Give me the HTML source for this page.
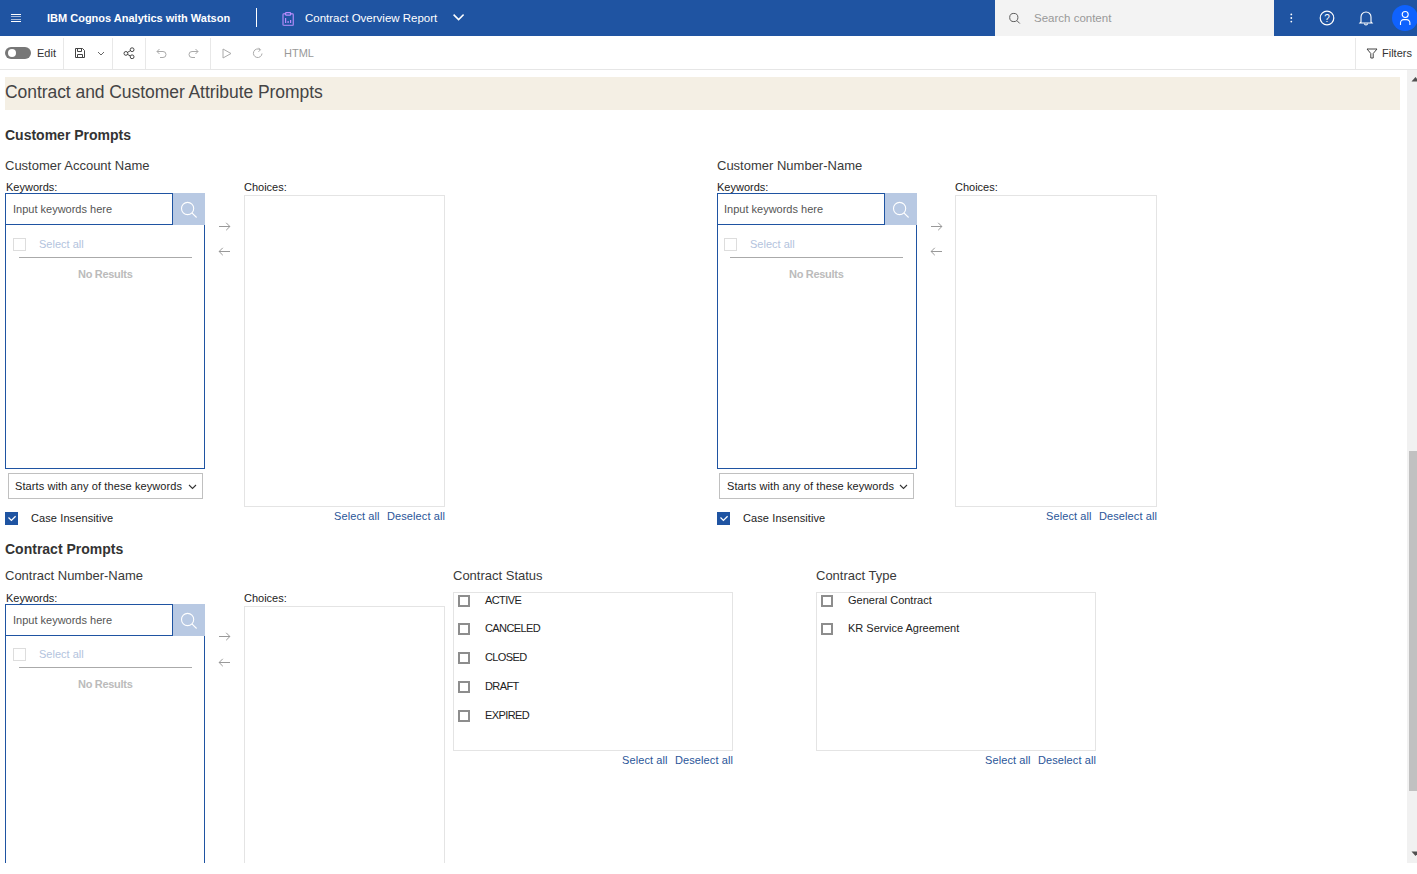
<!DOCTYPE html>
<html><head><meta charset="utf-8"><title>Contract Overview Report</title>
<style>
*{box-sizing:border-box;margin:0;padding:0}
html,body{width:1417px;height:874px;overflow:hidden;background:#fff;font-family:"Liberation Sans",sans-serif;position:relative}
.a{position:absolute;white-space:nowrap;line-height:normal}
#top{position:absolute;left:0;top:0;width:1417px;height:36px;background:#1f54a2}
#tb{position:absolute;left:0;top:36px;width:1417px;height:34px;background:#fff;border-bottom:1px solid #e6e6e6}
#content{position:absolute;left:0;top:0;width:1407px;height:863px;overflow:hidden;clip-path:inset(70px 0 0 0)}
.sep{position:absolute;top:2px;width:1px;height:31px;background:#e8e8e8}
.hdr{font-size:17.5px;color:#444;letter-spacing:-0.06px}
.h2{font-size:14px;font-weight:bold;color:#333}
.lab{font-size:13px;color:#3a3a3a}
.k{font-size:11px;color:#222}
.inp{position:absolute;border:1px solid #1f54a2;background:#fff}
.btn{position:absolute;background:#b8c9e3}
.res{position:absolute;border:1px solid #1f54a2;border-top:none}
.cb{position:absolute;width:13px;height:13px;border:1px solid #ddd;background:#fff}
.cbg{position:absolute;width:12px;height:12px;border:2px solid #8d8d8d;background:#fff}
.box{position:absolute;border:1px solid #e4e4e4}
.lnk{font-size:11px;color:#2a5699;letter-spacing:0.1px}
.item{font-size:11px;color:#222}
.caps{letter-spacing:-0.6px}
</style></head><body>

<div id="top">
  <div class="a" style="left:11px;top:14px;width:10px;height:1px;background:#fff"></div>
  <div class="a" style="left:11px;top:16px;width:10px;height:1px;background:#a9bbd9"></div>
  <div class="a" style="left:11px;top:19px;width:10px;height:1px;background:#a9bbd9"></div>
  <div class="a" style="left:11px;top:21px;width:10px;height:1px;background:#fff"></div>
  <div class="a" style="left:47px;top:12px;font-size:11px;font-weight:bold;color:#fff;letter-spacing:0px">IBM Cognos Analytics with Watson</div>
  <div class="a" style="left:256px;top:8px;width:1px;height:19px;background:#fff"></div>
  <svg class="a" style="left:280px;top:10px" width="16" height="18" viewBox="0 0 16 18"><rect x="3" y="3.8" width="10.3" height="11.6" rx="1" fill="none" stroke="#9a82e8" stroke-width="1.4"/><rect x="5.6" y="2.6" width="5" height="2.6" rx="0.8" fill="#1f54a2" stroke="#b98cff" stroke-width="1.3"/><path d="M5.6 8v5M8.1 11v2M10.6 10v3" stroke="#b98cff" stroke-width="1.2"/></svg>
  <div class="a" style="left:305px;top:12px;font-size:11.5px;color:#fff">Contract Overview Report</div>
  <svg class="a" style="left:452px;top:12px" width="12" height="10" viewBox="0 0 12 10"><path d="M1.6 2.6l5 5 5-5" fill="none" stroke="#fff" stroke-width="1.5"/></svg>
  <div class="a" style="left:995px;top:0;width:279px;height:36px;background:#f3f3f3"></div>
  <svg class="a" style="left:1008px;top:12px" width="14" height="14" viewBox="0 0 14 14"><circle cx="5.8" cy="5.5" r="4.1" fill="none" stroke="#555" stroke-width="0.95"/><path d="M8.8 8.5l3 3" stroke="#555" stroke-width="0.95"/></svg>
  <div class="a" style="left:1034px;top:12px;font-size:11.5px;color:#999">Search content</div>
  <svg class="a" style="left:1288px;top:12px" width="6" height="12" viewBox="0 0 6 12"><circle cx="3.3" cy="2.4" r="0.9" fill="#fff"/><circle cx="3.3" cy="6" r="0.9" fill="#fff"/><circle cx="3.3" cy="9.6" r="0.9" fill="#fff"/></svg>
  <svg class="a" style="left:1319px;top:10px" width="16" height="16" viewBox="0 0 16 16"><circle cx="8" cy="8" r="6.8" fill="none" stroke="#fff" stroke-width="1.2"/><text x="8" y="12" text-anchor="middle" font-size="10" fill="#fff" font-family="Liberation Sans">?</text></svg>
  <svg class="a" style="left:1358px;top:10px" width="16" height="16" viewBox="0 0 16 16"><path d="M3 12V7a5 5 0 0 1 10 0v5l1 1H2z" fill="none" stroke="#fff" stroke-width="1.1"/><path d="M6.5 13.5a1.5 1.5 0 0 0 3 0" fill="none" stroke="#fff" stroke-width="1.1"/></svg>
  <div class="a" style="left:1392px;top:5px;width:26px;height:26px;border-radius:13px;background:#0f62fe"></div>
  <svg class="a" style="left:1397px;top:9px" width="16" height="18" viewBox="0 0 16 18"><circle cx="8.2" cy="5.5" r="3" fill="none" stroke="#fff" stroke-width="1.1"/><path d="M3.5 16v-2.2a3.2 3.2 0 0 1 3.2-3.2h3a3.2 3.2 0 0 1 3.2 3.2v2.2" fill="none" stroke="#fff" stroke-width="1.1"/></svg>
</div>

<div id="tb">
  <div class="a" style="left:5px;top:11px;width:26px;height:12px;border-radius:6px;background:#777"></div>
  <div class="a" style="left:8px;top:13px;width:8px;height:8px;border-radius:4px;background:#fff"></div>
  <div class="a" style="left:37px;top:11px;font-size:11px;color:#333">Edit</div>
  <div class="sep" style="left:63px"></div>
  <svg class="a" style="left:74px;top:47px;top:11px" width="12" height="12" viewBox="0 0 12 12"><path d="M1.5 1.5h7l2 2v7h-9z" fill="none" stroke="#444" stroke-width="1"/><path d="M3.5 1.5v3h4v-3M3.5 10.5v-3h5v3" fill="none" stroke="#444" stroke-width="1"/></svg>
  <svg class="a" style="left:97px;top:15px" width="8" height="5" viewBox="0 0 8 5"><path d="M1 1l3 3 3-3" fill="none" stroke="#666" stroke-width="1"/></svg>
  <div class="sep" style="left:112px"></div>
  <svg class="a" style="left:123px;top:11px" width="12" height="12" viewBox="0 0 12 12"><circle cx="2.9" cy="6.4" r="1.9" fill="none" stroke="#444" stroke-width="1"/><circle cx="9.1" cy="2.7" r="1.9" fill="none" stroke="#444" stroke-width="1"/><circle cx="9.1" cy="9.8" r="1.9" fill="none" stroke="#444" stroke-width="1"/><path d="M4.5 5.4l3-1.8M4.5 7.4l3 1.6" stroke="#444" stroke-width="1"/></svg>
  <div class="sep" style="left:145px"></div>
  <svg class="a" style="left:156px;top:12px" width="11" height="10" viewBox="0 0 11 10"><path d="M3.5 1L1 3.5 3.5 6M1 3.5h6a3 3 0 0 1 0 6H4" fill="none" stroke="#aaa" stroke-width="1"/></svg>
  <svg class="a" style="left:188px;top:12px" width="11" height="10" viewBox="0 0 11 10"><path d="M7.5 1L10 3.5 7.5 6M10 3.5H4a3 3 0 0 0 0 6h3" fill="none" stroke="#aaa" stroke-width="1"/></svg>
  <div class="sep" style="left:210px"></div>
  <svg class="a" style="left:222px;top:12px" width="10" height="11" viewBox="0 0 10 11"><path d="M1 1l8 4.5-8 4.5z" fill="none" stroke="#aaa" stroke-width="1"/></svg>
  <svg class="a" style="left:252px;top:11px" width="12" height="12" viewBox="0 0 12 12"><path d="M10 6.5A4.3 4.3 0 1 1 8 2.6" fill="none" stroke="#aaa" stroke-width="1"/><path d="M6.5 0.8l2 2-2 2" fill="none" stroke="#aaa" stroke-width="1"/></svg>
  <div class="a" style="left:284px;top:11px;font-size:11px;color:#999">HTML</div>
  <div class="sep" style="left:1355px"></div>
  <svg class="a" style="left:1366px;top:12px" width="12" height="11" viewBox="0 0 12 11"><path d="M1 1h10L7.2 5.5v4.5H4.8V5.5z" fill="none" stroke="#444" stroke-width="1"/></svg>
  <div class="a" style="left:1382px;top:11px;font-size:11px;color:#333">Filters</div>
</div>
<div id="content"><div class="a" style="left:5px;top:77px;width:1395px;height:33px;background:#f4efe4"></div><div class="a hdr" style="left:5px;top:82px">Contract and Customer Attribute Prompts</div><div class="a h2" style="left:5px;top:127px">Customer Prompts</div><div class="a lab" style="left:5px;top:158px">Customer Account Name</div><div class="a k" style="left:6px;top:181px">Keywords:</div>
<div class="inp" style="left:5px;top:193px;width:168px;height:32px"></div>
<div class="a k" style="left:13px;top:203px;color:#555">Input keywords here</div>
<div class="btn" style="left:173px;top:193px;width:32px;height:32px"></div>
<svg class="a" style="left:180px;top:201px" width="18" height="18" viewBox="0 0 18 18"><circle cx="7.6" cy="7.5" r="6.1" fill="none" stroke="#fff" stroke-width="1.1"/><path d="M11.9 11.8L16.6 16.5" stroke="#fff" stroke-width="1.1"/></svg>
<div class="res" style="left:5px;top:225px;width:200px;height:244px"></div>
<div class="cb" style="left:13px;top:238px"></div>
<div class="a k" style="left:39px;top:238px;color:#b3c3dd">Select all</div>
<div class="a" style="left:19px;top:257px;width:173px;height:1px;background:#aaa"></div>
<div class="a k" style="left:78px;top:268px;color:#bbb;font-weight:bold;letter-spacing:-0.3px">No Results</div>
<svg class="a" style="left:218px;top:221px" width="13" height="11" viewBox="0 0 13 11"><path d="M1 5.5h11M8.2 1.8l3.7 3.7-3.7 3.7" fill="none" stroke="#999" stroke-width="1"/></svg>
<svg class="a" style="left:218px;top:246px" width="13" height="11" viewBox="0 0 13 11"><path d="M1 5.5h11M4.8 1.8L1.1 5.5l3.7 3.7" fill="none" stroke="#999" stroke-width="1"/></svg><div class="a k" style="left:244px;top:181px">Choices:</div>
<div class="box" style="left:244px;top:195px;width:201px;height:312px"></div><div class="a" style="left:8px;top:473px;width:195px;height:26px;border:1px solid #c0c0c0"></div><div class="a k" style="left:15px;top:480px;letter-spacing:0.1px">Starts with any of these keywords</div><svg class="a" style="left:188px;top:484px" width="9" height="6" viewBox="0 0 9 6"><path d="M1 1l3.5 3.5L8 1" fill="none" stroke="#333" stroke-width="1.1"/></svg><div class="a" style="left:5px;top:512px;width:13px;height:13px;background:#1f54a2"></div><svg class="a" style="left:5px;top:512px" width="13" height="13" viewBox="0 0 13 13"><path d="M3.5 5.5L6.4 8.4L10.6 4.2" fill="none" stroke="#fff" stroke-width="1.25"/></svg><div class="a k" style="left:31px;top:512px;letter-spacing:0.1px">Case Insensitive</div><div class="a lnk" style="left:334px;top:510px">Select all</div><div class="a lnk" style="left:387px;top:510px">Deselect all</div><div class="a lab" style="left:717px;top:158px">Customer Number-Name</div><div class="a k" style="left:717px;top:181px">Keywords:</div>
<div class="inp" style="left:717px;top:193px;width:168px;height:32px"></div>
<div class="a k" style="left:724px;top:203px;color:#555">Input keywords here</div>
<div class="btn" style="left:885px;top:193px;width:32px;height:32px"></div>
<svg class="a" style="left:892px;top:201px" width="18" height="18" viewBox="0 0 18 18"><circle cx="7.6" cy="7.5" r="6.1" fill="none" stroke="#fff" stroke-width="1.1"/><path d="M11.9 11.8L16.6 16.5" stroke="#fff" stroke-width="1.1"/></svg>
<div class="res" style="left:717px;top:225px;width:200px;height:244px"></div>
<div class="cb" style="left:724px;top:238px"></div>
<div class="a k" style="left:750px;top:238px;color:#b3c3dd">Select all</div>
<div class="a" style="left:730px;top:257px;width:173px;height:1px;background:#aaa"></div>
<div class="a k" style="left:789px;top:268px;color:#bbb;font-weight:bold;letter-spacing:-0.3px">No Results</div>
<svg class="a" style="left:930px;top:221px" width="13" height="11" viewBox="0 0 13 11"><path d="M1 5.5h11M8.2 1.8l3.7 3.7-3.7 3.7" fill="none" stroke="#999" stroke-width="1"/></svg>
<svg class="a" style="left:930px;top:246px" width="13" height="11" viewBox="0 0 13 11"><path d="M1 5.5h11M4.8 1.8L1.1 5.5l3.7 3.7" fill="none" stroke="#999" stroke-width="1"/></svg><div class="a k" style="left:955px;top:181px">Choices:</div>
<div class="box" style="left:955px;top:195px;width:202px;height:312px"></div><div class="a" style="left:719px;top:473px;width:195px;height:26px;border:1px solid #c0c0c0"></div><div class="a k" style="left:727px;top:480px;letter-spacing:0.1px">Starts with any of these keywords</div><svg class="a" style="left:899px;top:484px" width="9" height="6" viewBox="0 0 9 6"><path d="M1 1l3.5 3.5L8 1" fill="none" stroke="#333" stroke-width="1.1"/></svg><div class="a" style="left:717px;top:512px;width:13px;height:13px;background:#1f54a2"></div><svg class="a" style="left:717px;top:512px" width="13" height="13" viewBox="0 0 13 13"><path d="M3.5 5.5L6.4 8.4L10.6 4.2" fill="none" stroke="#fff" stroke-width="1.25"/></svg><div class="a k" style="left:743px;top:512px;letter-spacing:0.1px">Case Insensitive</div><div class="a lnk" style="left:1046px;top:510px">Select all</div><div class="a lnk" style="left:1099px;top:510px">Deselect all</div><div class="a h2" style="left:5px;top:541px">Contract Prompts</div><div class="a lab" style="left:5px;top:568px">Contract Number-Name</div><div class="a k" style="left:6px;top:592px">Keywords:</div>
<div class="inp" style="left:5px;top:604px;width:168px;height:32px"></div>
<div class="a k" style="left:13px;top:614px;color:#555">Input keywords here</div>
<div class="btn" style="left:173px;top:604px;width:32px;height:32px"></div>
<svg class="a" style="left:180px;top:612px" width="18" height="18" viewBox="0 0 18 18"><circle cx="7.6" cy="7.5" r="6.1" fill="none" stroke="#fff" stroke-width="1.1"/><path d="M11.9 11.8L16.6 16.5" stroke="#fff" stroke-width="1.1"/></svg>
<div class="res" style="left:5px;top:636px;width:200px;height:300px"></div>
<div class="cb" style="left:13px;top:648px"></div>
<div class="a k" style="left:39px;top:648px;color:#b3c3dd">Select all</div>
<div class="a" style="left:19px;top:667px;width:173px;height:1px;background:#aaa"></div>
<div class="a k" style="left:78px;top:678px;color:#bbb;font-weight:bold;letter-spacing:-0.3px">No Results</div>
<svg class="a" style="left:218px;top:631px" width="13" height="11" viewBox="0 0 13 11"><path d="M1 5.5h11M8.2 1.8l3.7 3.7-3.7 3.7" fill="none" stroke="#999" stroke-width="1"/></svg>
<svg class="a" style="left:218px;top:657px" width="13" height="11" viewBox="0 0 13 11"><path d="M1 5.5h11M4.8 1.8L1.1 5.5l3.7 3.7" fill="none" stroke="#999" stroke-width="1"/></svg><div class="a k" style="left:244px;top:592px">Choices:</div>
<div class="box" style="left:244px;top:606px;width:201px;height:300px"></div><div class="a lab" style="left:453px;top:568px">Contract Status</div><div class="box" style="left:453px;top:592px;width:280px;height:159px"></div>
<div class="cbg" style="left:458px;top:595px"></div>
<div class="a item caps" style="left:485px;top:594px">ACTIVE</div>
<div class="cbg" style="left:458px;top:623px"></div>
<div class="a item caps" style="left:485px;top:622px">CANCELED</div>
<div class="cbg" style="left:458px;top:652px"></div>
<div class="a item caps" style="left:485px;top:651px">CLOSED</div>
<div class="cbg" style="left:458px;top:681px"></div>
<div class="a item caps" style="left:485px;top:680px">DRAFT</div>
<div class="cbg" style="left:458px;top:710px"></div>
<div class="a item caps" style="left:485px;top:709px">EXPIRED</div><div class="a lnk" style="left:622px;top:754px">Select all</div><div class="a lnk" style="left:675px;top:754px">Deselect all</div><div class="a lab" style="left:816px;top:568px">Contract Type</div><div class="box" style="left:816px;top:592px;width:280px;height:159px"></div>
<div class="cbg" style="left:821px;top:595px"></div>
<div class="a item" style="left:848px;top:594px">General Contract</div>
<div class="cbg" style="left:821px;top:623px"></div>
<div class="a item" style="left:848px;top:622px">KR Service Agreement</div><div class="a lnk" style="left:985px;top:754px">Select all</div><div class="a lnk" style="left:1038px;top:754px">Deselect all</div></div>
<div class="a" style="left:1407px;top:70px;width:10px;height:793px;background:#f1f1f1"></div>
<div class="a" style="left:1409px;top:451px;width:8px;height:340px;background:#c1c1c1"></div>
<svg class="a" style="left:1407px;top:74px" width="10" height="10" viewBox="0 0 10 10"><path d="M4.5 7.5L8.5 3L12.5 7.5z" fill="#505050"/></svg>
<svg class="a" style="left:1407px;top:849px" width="10" height="10" viewBox="0 0 10 10"><path d="M4.5 2.5L8.5 7L12.5 2.5z" fill="#505050"/></svg>

</body></html>
